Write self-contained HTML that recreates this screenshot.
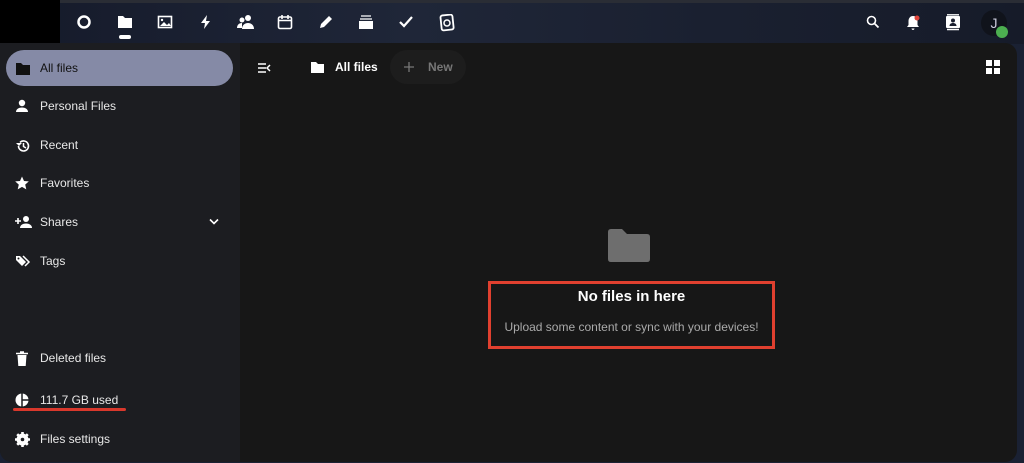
<!DOCTYPE html>
<html><head><style>
*{margin:0;padding:0;box-sizing:border-box}
body{width:1024px;height:463px;overflow:hidden;background:#1a2133;font-family:"Liberation Sans",sans-serif;position:relative}
.top{position:absolute;left:0;top:0;width:1024px;height:44px;background:linear-gradient(90deg,#151a2a,#1f2638 40%,#1a2030 70%,#161b29)}
.blk{position:absolute;left:0;top:0;width:60px;height:44px;background:#000}
.tline{position:absolute;left:60px;top:0;width:964px;height:3px;background:#2a2d35}
.ic{position:absolute;top:14px}
.panel{position:absolute;left:0;top:43px;width:1017px;height:419px;border-radius:0 12px 12px 12px;overflow:hidden;background:#171717}
.side{position:absolute;left:0;top:0;width:240px;height:419px;background:#1c1d21}
.item{position:absolute;left:0;width:240px;height:36px;color:#e8e8e8;font-size:12px;line-height:36px;padding-left:40px}
.item svg{position:absolute;left:15px;top:11px}
.act{left:6px;width:227px;top:7px;background:#858aa6;border-radius:18px;color:#111;padding-left:34px}
.act svg{left:9px}
</style></head><body>
<div class="top"></div><div class="blk"></div><div class="tline"></div>
<svg class="ic" style="left:76px" width="16" height="16"><circle cx="8" cy="8" r="5.5" fill="none" stroke="#fff" stroke-width="2.5"/></svg>
<svg class="ic" style="left:117px" width="16" height="16"><path d="M1 2h5l2 2h7v10H1z" fill="#fff"/></svg>
<div style="position:absolute;left:119px;top:35px;width:12px;height:4px;border-radius:2px;background:#fff"></div>
<svg class="ic" style="left:157px" width="16" height="16"><rect x="1.5" y="2.5" width="13" height="11" fill="none" stroke="#fff" stroke-width="1.6"/><path d="M3 12l4-4 3 3 2-2 2 3z" fill="#fff"/><circle cx="5" cy="6" r="1.2" fill="#fff"/></svg>
<svg class="ic" style="left:198px" width="16" height="16"><path d="M9 1L3 9h4l-1 6 6-8H8z" fill="#fff"/></svg>
<svg class="ic" style="left:237px" width="18" height="16"><circle cx="11" cy="4" r="3" fill="#fff"/><path d="M5 15c0-4 3-6 6-6s6 2 6 6z" fill="#fff"/><circle cx="5" cy="6" r="2.5" fill="#fff"/><path d="M0 14c0-3 2-5 5-5l0 5z" fill="#fff"/></svg>
<svg class="ic" style="left:277px" width="16" height="16"><rect x="1.5" y="3" width="13" height="11.5" rx="1.5" fill="none" stroke="#fff" stroke-width="1.6"/><path d="M1.5 6.5h13M5 1v4M11 1v4" stroke="#fff" stroke-width="1.6"/></svg>
<svg class="ic" style="left:318px" width="16" height="16"><path d="M2 14l1-4 8-8 3 3-8 8z" fill="#fff"/></svg>
<svg class="ic" style="left:358px" width="16" height="16"><path d="M3 2h10M2 5h12" stroke="#fff" stroke-width="1.3"/><rect x="1" y="7" width="14" height="8" fill="#fff"/></svg>
<svg class="ic" style="left:398px" width="16" height="16"><path d="M2 8l4 4 8-9" fill="none" stroke="#fff" stroke-width="2.2"/></svg>
<svg class="ic" style="left:439px" width="16" height="18"><rect x="2" y="1" width="12" height="15" rx="2" fill="none" stroke="#fff" stroke-width="1.8" transform="rotate(-6 8 8)"/><circle cx="8" cy="9" r="3" fill="none" stroke="#fff" stroke-width="1.5"/></svg>
<svg class="ic" style="left:865px" width="16" height="16"><circle cx="6.5" cy="6.5" r="4" fill="none" stroke="#fff" stroke-width="1.6"/><path d="M9.5 9.5l4 4" stroke="#fff" stroke-width="1.8"/></svg>
<svg class="ic" style="left:905px" width="16" height="18"><path d="M8 2c-3 0-4.5 2.5-4.5 5v4L2 13h12l-1.5-2V7C12.5 4.5 11 2 8 2zM6.5 14.5h3c0 1-1 1.5-1.5 1.5s-1.5-.5-1.5-1.5z" fill="#fff"/><circle cx="12" cy="4" r="2.5" fill="#e0433a"/></svg>
<svg class="ic" style="left:945px" width="16" height="18"><rect x="1" y="2" width="14" height="12" rx="1" fill="#fff"/><path d="M2 0.8h12M2 15.5h12" stroke="#fff" stroke-width="1.4"/><circle cx="8" cy="6.5" r="2" fill="#1b2030"/><path d="M4.5 12c0-2 1.5-3 3.5-3s3.5 1 3.5 3z" fill="#1b2030"/></svg>
<div style="position:absolute;left:981px;top:10px;width:26px;height:26px;border-radius:50%;background:#10131b;color:#ccd;font-size:14px;text-align:center;line-height:26px">J</div>
<div style="position:absolute;left:996px;top:26px;width:12px;height:12px;border-radius:50%;background:#4caf50"></div>

<div class="panel">
<div class="side">
<div class="item act"><svg width="16" height="16"><path d="M1 2h5l2 2h7v10H1z" fill="#111"/></svg>All files</div>
<div class="item" style="top:45px"><svg width="14" height="14"><circle cx="7" cy="4" r="3.2" fill="#fff"/><path d="M1 13c0-3 3-4.5 6-4.5s6 1.5 6 4.5z" fill="#fff"/></svg>Personal Files</div>
<div class="item" style="top:84px"><svg width="16" height="16"><path d="M3.5 8a5 5 0 1 0 1.5-3.6" fill="none" stroke="#fff" stroke-width="1.6"/><path d="M1 5l3 3 3-3z" fill="#fff"/><path d="M8.5 5v3.5l2.5 1.5" fill="none" stroke="#fff" stroke-width="1.5"/></svg>Recent</div>
<div class="item" style="top:122px"><svg width="14" height="14"><path d="M7 0.5l2 4.5 4.8.4-3.6 3.2 1.1 4.8L7 10.9 2.7 13.4l1.1-4.8L.2 5.4 5 5z" fill="#fff"/></svg>Favorites</div>
<div class="item" style="top:161px"><svg width="17" height="14"><circle cx="11" cy="4" r="3" fill="#fff"/><path d="M5 13c0-3 3-4.5 6-4.5s6 1.5 6 4.5z" fill="#fff"/><path d="M0 6h6M3 3v6" stroke="#fff" stroke-width="1.6"/></svg>Shares<svg style="left:209px;top:14px" width="10" height="8"><path d="M1 1.5l4 4 4-4" fill="none" stroke="#fff" stroke-width="1.6"/></svg></div>
<div class="item" style="top:200px"><svg width="16" height="14"><path d="M1 2v4l6 6 4-4-6-6z" fill="#fff"/><path d="M8 2l6 6-4 4" fill="none" stroke="#fff" stroke-width="1.5"/><circle cx="3.5" cy="4.5" r="1" fill="#1c1d21"/></svg>Tags</div>
<div class="item" style="top:297px"><svg width="14" height="16"><path d="M1 2.5h12M5 1h4" stroke="#fff" stroke-width="1.6"/><path d="M2.5 4h9l-.8 11H3.3z" fill="#fff"/></svg>Deleted files</div>
<div class="item" style="top:339px"><svg width="14" height="14"><circle cx="7" cy="7" r="6.5" fill="#fff"/><path d="M7 0v14M7 7h7" stroke="#1c1d21" stroke-width="1.5"/></svg>111.7 GB used</div>
<div style="position:absolute;left:13px;top:365px;width:113px;height:3px;border-radius:2px;background:#d9382c"></div>
<div class="item" style="top:378px"><svg width="15" height="15"><circle cx="7.5" cy="7.5" r="4.5" fill="none" stroke="#fff" stroke-width="3"/><path d="M7.5 0v15M0 7.5h15M2.2 2.2l10.6 10.6M12.8 2.2L2.2 12.8" stroke="#fff" stroke-width="2.6"/><circle cx="7.5" cy="7.5" r="1.8" fill="#1c1d21"/></svg>Files settings</div>
</div>
<svg style="position:absolute;left:257px;top:19px" width="14" height="12"><path d="M1 2h8M1 6h8M1 10h8M13 3l-3 3 3 3" fill="none" stroke="#fff" stroke-width="1.5"/></svg>
<svg style="position:absolute;left:310px;top:17px" width="15" height="14"><path d="M1 2h5l2 2h6v9H1z" fill="#fff"/></svg>
<div style="position:absolute;left:335px;top:17px;color:#fff;font-weight:bold;font-size:12px">All files</div>
<div style="position:absolute;left:390px;top:7px;width:76px;height:34px;border-radius:17px;background:#1d1d1d;color:#777;font-size:12px;font-weight:bold;line-height:34px;padding-left:38px">New</div>
<svg style="position:absolute;left:403px;top:18px" width="12" height="12"><path d="M6 1v10M1 6h10" stroke="#777" stroke-width="1.3"/></svg>
<svg style="position:absolute;left:985px;top:16px" width="16" height="16"><rect x="1" y="1" width="6" height="6" fill="#fff"/><rect x="9" y="1" width="6" height="6" fill="#fff"/><rect x="1" y="9" width="6" height="6" fill="#fff"/><rect x="9" y="9" width="6" height="6" fill="#fff"/></svg>
<svg style="position:absolute;left:606px;top:185px" width="46" height="36"><path d="M2 4q0-3 3-3h11l5 5h20q3 0 3 3v22q0 3-3 3H5q-3 0-3-3z" fill="#6e6e6e"/></svg>
<div style="position:absolute;left:488px;top:238px;width:287px;height:68px;border:3px solid #e0402f"></div>
<div style="position:absolute;left:488px;top:245px;width:287px;text-align:center;color:#fff;font-weight:bold;font-size:15px">No files in here</div>
<div style="position:absolute;left:488px;top:277px;width:287px;text-align:center;color:#aaa;font-size:12px">Upload some content or sync with your devices!</div>
</div>
</body></html>
